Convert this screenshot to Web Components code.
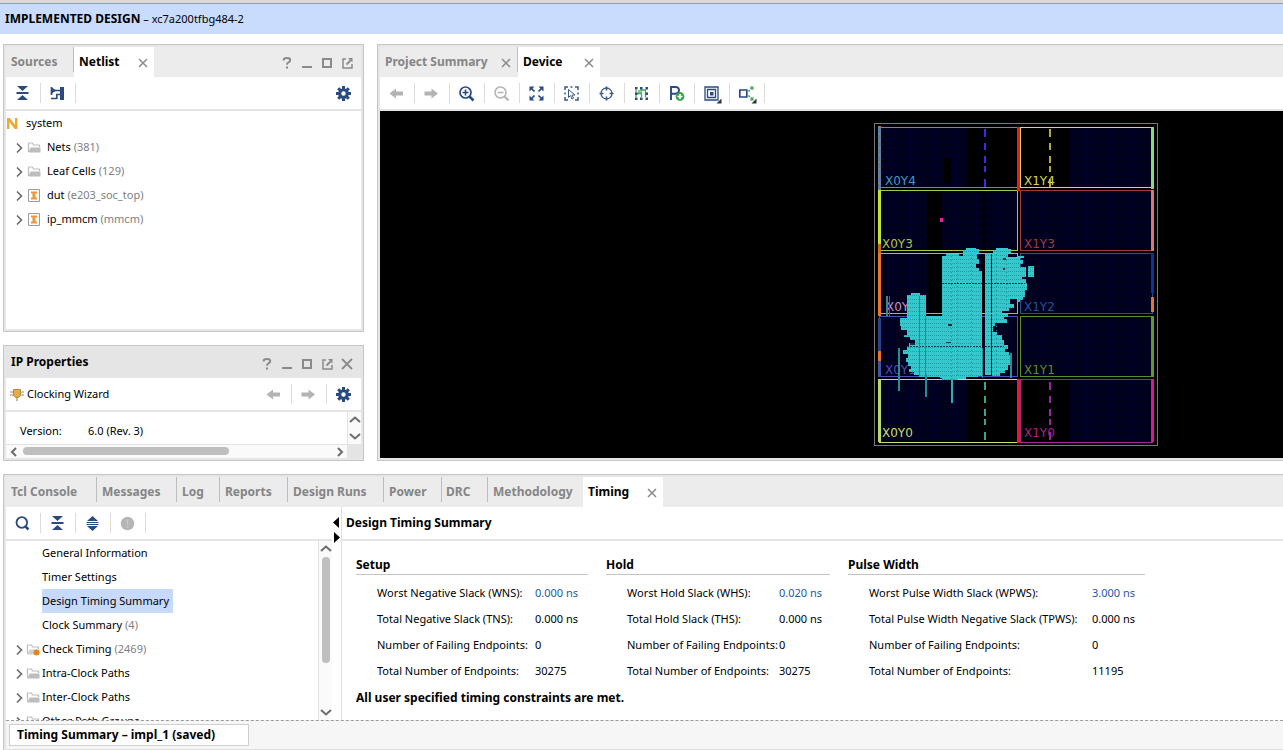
<!DOCTYPE html>
<html lang="en">
<head>
<meta charset="utf-8">
<title>Implemented Design</title>
<style>
  html, body { margin: 0; height: 100%; }
  body { font: 11px/24px "Noto Sans", "Open Sans", sans-serif; color: #000; background: #fff; }
</style>
</head>
<body>
<design-workbench></design-workbench>

<script>
const ICONS = {
  close: '<path d="M4 4l8 8M12 4l-8 8" stroke="#8a8a8a" stroke-width="1.5"/>',
  closeBig: '<path d="M3 3l10 10M13 3L3 13" stroke="#8a8a8a" stroke-width="1.8"/>',
  help: '<path d="M4.8 5.6V4.4Q5 3 8 3t3.2 1.6Q11.4 6.5 9.5 7.4 8 8 8 9.8" stroke="#8a8a8a" stroke-width="2"/><path d="M7 11.5h2v2H7z" fill="#8a8a8a"/>',
  min: '<path d="M3 12h10" stroke="#8a8a8a" stroke-width="2"/>',
  max: '<path d="M4 4h8v8H4z" stroke="#8a8a8a" stroke-width="2"/>',
  float: '<path d="M7 4H4v9h9V9" stroke="#8a8a8a" stroke-width="1.5"/><path d="M7.5 9.5l4-4" stroke="#8a8a8a" stroke-width="1.8"/><path d="M9 3h4.5v4.5z" fill="#8a8a8a"/>',
  collapse: '<path d="M3 1h11L8.5 6zM3 15h11L8.5 10zM2.500 7h12v2h-12z" fill="#2b4a7f"/>',
  expand: '<path d="M3 6h11L8.5 1zM3 11h11L8.5 16zM2.500 7h12v1h-12zM2.500 9h12v1h-12z" fill="#2b4a7f"/>',
  schematic: '<path d="M2 2l5.500 3.500L2 9zM11 2h4v13h-4z" fill="#2b4a7f"/><path d="M6 5.500h6M2 13.500h6M7.800 14V9.500H12M2.500 2v8" stroke="#2b4a7f" stroke-width="1.7"/>',
  gear: '<g fill="#2b4a7f"><path d="M7 1h3v15H7zM1 7h15v3H1z"/><path d="M7 1h3v15H7zM1 7h15v3H1z" transform="rotate(45 8.5 8.5)"/></g><circle cx="8.5" cy="8.5" r="3.7" stroke="#2b4a7f" stroke-width="3.2"/><circle cx="8.5" cy="8.5" r="2.2" fill="#fff"/>',
  back: '<path d="M1.500 8.500L8 3.500v3h7v4H8v3z" fill="#b3b3b3"/>',
  fwd: '<path d="M15 8.500L8.500 3.500v3h-7v4h7v3z" fill="#b3b3b3"/>',
  zoomIn: '<circle cx="7.5" cy="7.5" r="5.5" stroke="#2b4a7f" stroke-width="1.7"/><path d="M11.500 11.500l4 4" stroke="#2b4a7f" stroke-width="2.5"/><path d="M7.500 4.500v6M4.500 7.500h6" stroke="#2b4a7f" stroke-width="1.6"/>',
  zoomOut: '<circle cx="7.5" cy="7.5" r="5.5" stroke="#b3b3b3" stroke-width="1.5"/><path d="M11.500 11.500l4 4" stroke="#b3b3b3" stroke-width="2.2"/><path d="M4.500 7.500h6" stroke="#b3b3b3" stroke-width="1.5"/>',
  fit: '<path d="M1.500 1.500h5l-5 5zM15.500 1.500v5l-5-5zM1.500 15.500v-5l5 5zM15.500 15.500h-5l5-5z" fill="#2b4a7f"/><path d="M3 3l3.500 3.500M14 3l-3.500 3.500M3 14l3.500-3.500M14 14l-3.500-3.500" stroke="#2b4a7f" stroke-width="1.7"/>',
  fitSel: '<path d="M2 5V2h3M12 2h3v3M2 12v3h3M15 12v3h-3M7.500 2h2M2 7.500v2M15 7.500v2" stroke="#3b5889" stroke-width="1.5"/><path d="M5.500 4.500v8l2-2 1.500 3.500 1.500-.7L9 10h3z" stroke="#3b5889"/>',
  target: '<circle cx="8.5" cy="8.5" r="5.5" stroke="#3b5889" stroke-width="1.3"/><path d="M8.500 1.500v4M8.500 11.500v4M1.500 8.500h4M11.500 8.500h4" stroke="#3b5889" stroke-width="1.6"/>',
  routing: '<path d="M3 5v7M8 8.500V5h4.500v7M4 8.500h4.500V12M12.500 8.500H14M6 5v3.500" stroke="#45a856" stroke-width="1.3"/><path d="M2 2h2.500v2.500H2zM7 2h2.500v2.500H7zM12.500 2H15v2.500h-2.500zM2 12.500h2.500V15H2zM7 12.500h2.500V15H7zM12.500 12.500H15V15h-2.500zM2 7.500h2.500V10H2zM12.500 7.500H15V10h-2.500z" fill="#2b4a7f"/>',
  pblock: '<path d="M3 15V2h4.500Q11 2 11 5.300T7.500 8.700H3" stroke="#2b4a7f" stroke-width="1.9"/><circle cx="12" cy="11.500" r="4.4" fill="#38a24a"/><path d="M12 9v5M9.500 11.500h5" stroke="#fff" stroke-width="1.6"/>',
  layers: '<path d="M2 2h13v13H2zM4.500 4.500h8v8h-8z" stroke="#2b4a7f" stroke-width="1.3"/><path d="M7 7h3.500v3.500H7z" fill="#2b4a7f"/><path d="M18.500 13.500v5h-5z" fill="#333"/>',
  connect: '<path d="M1.800 5h7v7h-7z" stroke="#2b4a7f" stroke-width="1.7"/><path d="M10.500 6.500l4-4M10.500 10.500l4 4" stroke="#45a856" stroke-width="1.6" stroke-dasharray="2 1"/><path d="M11.500 1.500h4v4zM15.500 11.500v4h-4z" fill="#45a856"/><path d="M18.500 13.500v5h-5z" fill="#333"/>',
  search: '<circle cx="7.8" cy="7.5" r="5.3" stroke="#2b4a7f" stroke-width="1.8"/><path d="M11.500 11.500l3 3" stroke="#2b4a7f" stroke-width="2.5"/>',
  alert: '<circle cx="8.5" cy="8.5" r="6.8" fill="#b5b5b5"/><path d="M8.500 4.500v5M8.500 11v1.500" stroke="#c9c9c9" stroke-width="1.6"/>',
  chevron: '<path d="M6 4.500l4.500 4.500L6 13.500" stroke="#6c6c6c" stroke-width="1.7"/>',
  folder: '<path d="M2.500 13V4h4l1 2h6v2" stroke="#bdbdbd" stroke-width="1.2"/><path d="M4.500 8.500h10v5h-12z" fill="#bdbdbd"/>',
  folderDot: '<path d="M2.500 13V4h4l1 2h6v2" stroke="#bdbdbd" stroke-width="1.2"/><path d="M4.500 8.500h10v5h-12z" fill="#cfcfcf"/><circle cx="11.5" cy="11.5" r="2.9" fill="#e8821e"/>',
  instance: '<path d="M2.500 2.500h11v12h-11z" stroke="#9a9a9a"/><path d="M5 4.500h6v2H9.500v4H11v2H5v-2h1.500v-4H5z" fill="#f0953b"/>',
  netlist: '<path d="M2.200 14V3M10.200 14V3" stroke="#eda82e" stroke-width="2.4"/><path d="M2.500 3.500l7.500 10" stroke="#eda82e" stroke-width="2.8"/>',
  ip: '<path d="M1 6h14M1 9h14M8 11v4" stroke="#a58a78" stroke-width="1.2"/><path d="M4.500 3.500h7v6l-2 2h-3l-2-2z" fill="#e5ac45" stroke="#b98b3c"/>'
};

function define(name, css, html, init) {
  const template = document.createElement('template');
  template.innerHTML = `<style>:host{display:block;box-sizing:border-box}*{box-sizing:border-box}button{font:inherit;color:inherit;border:0;padding:0;margin:0;background:none}${css}</style>${html}`;
  customElements.define(name, class extends HTMLElement {
    constructor() {
      super();
      this.attachShadow({ mode: 'open' }).append(template.content.cloneNode(true));
    }
    connectedCallback() { if (init) init(this, this.shadowRoot); }
  });
}

define('ui-icon', `:host{width:17px;height:17px;flex:none}svg{display:block;overflow:visible}`,
  `<svg width="17" height="17" viewBox="0 0 17 17" fill="none" aria-hidden="true"></svg>`,
  (el, root) => { root.querySelector('svg').innerHTML = ICONS[el.getAttribute('name')] || ''; });

/* Toolbar button: 34px cell followed by a short separator line */
define('tool-button', `
  :host{display:flex;align-items:center;width:35px;height:32px;flex:none}
  button{flex:1;display:flex;justify-content:center;align-items:center;height:32px;padding-right:1px}
  i{width:1px;height:20px;background:#dcdcdc}
  :host([last]){width:34px}:host([last]) i{display:none}`,
  `<button type="button"><ui-icon></ui-icon></button><i></i>`,
  (el, root) => {
    const b = root.querySelector('button');
    b.setAttribute('aria-label', el.getAttribute('label'));
    b.disabled = el.hasAttribute('disabled');
    const icon = document.createElement('ui-icon');
    icon.setAttribute('name', el.getAttribute('icon'));
    b.replaceChildren(icon);
  });

define('tool-bar', `:host{display:flex;height:34px;border-bottom:2px solid #e4e4e4;background:#fff;flex:none;align-items:center}`, `<slot></slot>`);

define('window-buttons', `:host{display:flex;margin-left:auto;padding:2px 4px 0 0}
  button{width:20px;height:20px;display:flex;align-items:center;justify-content:center}`, ``,
  (el, root) => {
    const all = { help: 'Help', min: 'Minimize', max: 'Maximize', float: 'Float', closeBig: 'Close' };
    for (const name of el.getAttribute('show').split(' '))
      root.innerHTML += `<button type="button" aria-label="${all[name]}"><ui-icon name="${name}"></ui-icon></button>`;
  });

define('dock-tab', `
  :host{display:flex;height:30px;color:#858585;font:bold 12px/26px "Noto Sans","Open Sans",sans-serif;white-space:nowrap;flex:none}
  .tab{padding:0 14px 0 5px;line-height:26px;text-align:left;flex:1}
  .x{display:none;width:17px;margin:2px 2px 0 0;align-items:center}
  :host([closable]) .x{display:flex}
  :host([closable]) .tab{padding-right:0}
  i{width:1px;height:25px;background:#bdbdbd}
  :host([active]){background:#fff;color:#000}
  :host([active]) i{display:none}`,
  `<button class="tab" type="button" role="tab"><slot></slot></button><button class="x" type="button" aria-label="Close tab"><ui-icon name="close"></ui-icon></button><i></i>`);

define('tab-strip', `:host{display:flex;height:30px;background:#ececec;align-items:center;flex:none}`, `<slot></slot>`);

define('dock-panel', `:host{display:flex;flex-direction:column;min-width:0;min-height:0;border:1px solid #c6c6c6;background:#e6e6e6;padding:2px}
  .body{flex:1;min-height:0;background:#fff;display:flex;flex-direction:column;overflow:hidden}
  :host([open-right]){border-right:0;padding-right:0}
  :host([open-bottom]){border-bottom:0;padding-bottom:0}`,
  `<slot name="head"></slot><div class="body"><slot></slot></div>`);

define('tree-item', `
  :host{display:flex;align-items:center;height:24px;padding-left:5px;white-space:pre;flex:none}
  ui-icon+ui-icon{margin-left:-2px}
  .l{padding-left:4px}
  ::slotted(small){font-size:11px;color:#808080}
  :host([near]) .l{padding-left:0}
  :host([near]) ui-icon+ui-icon{margin-left:-3px}
  :host([leaf]){padding-left:36px}:host([leaf]) .l{padding:0 4px 0 0}
  :host([root]){padding-left:0}:host([root]) .l{padding-left:3px}
  :host([selected]) .l{background:#c8dafc}`, `<span class="l"><slot></slot></span>`,
  (el, root) => {
    const l = root.querySelector('.l');
    if (!el.hasAttribute('leaf') && !el.hasAttribute('root')) l.insertAdjacentHTML('beforebegin', '<ui-icon name="chevron"></ui-icon>');
    if (el.hasAttribute('icon')) l.insertAdjacentHTML('beforebegin', `<ui-icon name="${el.getAttribute('icon')}"></ui-icon>`);
  });

define('scroll-rail', `
  :host{display:flex;align-items:center;background:#fafafa;flex:none}
  :host([vertical]){flex-direction:column;width:14px;border-left:1px solid #e2e2e2;overflow:hidden}
  :host([horizontal]){height:14px;border-top:1px solid #e2e2e2}
  :host([horizontal]) svg{width:17px}
  .track{flex:1;align-self:stretch}
  .thumb{background:#bfbfbf;border-radius:4px}
  :host([vertical]) .thumb{width:8px;height:var(--thumb,0);margin:0 auto}
  :host([horizontal]) .thumb{height:8px;width:var(--thumb,0);margin-top:2px}
  svg{display:block;flex:none}`,
  `<svg width="13" height="16" viewBox="0 0 13 16" fill="none"><path stroke="#6c6c6c" stroke-width="2"/></svg><div class="track"><div class="thumb"></div></div><svg width="13" height="16" viewBox="0 0 13 16" fill="none"><path stroke="#6c6c6c" stroke-width="2"/></svg>`,
  (el, root) => {
    const v = el.hasAttribute('vertical');
    const [a, b] = root.querySelectorAll('path');
    a.setAttribute('d', v ? 'M2 10l5-4.500L12 10' : 'M8 4L4 8l4 4');
    b.setAttribute('d', v ? 'M2 6l5 4.500L12 6' : 'M6 4l4 4-4 4');
  });

define('slack-table', `
  :host{flex:none;width:var(--w)}
  table{border-collapse:collapse;width:100%;table-layout:fixed}
  caption{font:bold 12px/18px "Noto Sans","Open Sans",sans-serif;text-align:left;border-bottom:1px solid #c4c4c4;margin-bottom:5px}
  th{font-weight:normal;text-align:left;padding:0 0 0 21px;width:var(--label);white-space:nowrap}
  td{padding:0;white-space:nowrap}
  th,td{height:26px;line-height:26px}
  a{color:#2558a5;text-decoration:none}`, `<table><caption></caption><tbody></tbody></table>`,
  (el, root) => {
    root.querySelector('caption').textContent = el.getAttribute('heading');
    const rows = el.getAttribute('rows').split('|').map(r => r.split('='));
    root.querySelector('tbody').innerHTML = rows.map(([k, v], i) =>
      `<tr><th scope="row">${k}</th><td>${i ? v : `<a href="#paths">${v}</a>`}</td></tr>`).join('');
  });

define('device-view', `
  :host{flex:1;background:#000;display:flex;justify-content:flex-end;align-items:flex-start;padding:12px 124px 0 0;min-height:0}
  svg{display:block;flex:none}
  text{font:12px "DejaVu Sans",sans-serif}`,
  `<svg width="285" height="324" viewBox="874 123 285 324" role="img" aria-label="Device floorplan"></svg>`,
  (el, root) => {
    const ys = [[127, 61], [190, 61], [253, 61], [316, 61], [379, 64]];
    const left = ['#3a9fc0', '#a9c944', '#c795cf', '#4c50b4', '#c9df70'];
    const right = ['#d7d75a', '#a23c3c', '#1f5698', '#5d8c26', '#a9218d'];
    const rect = (x, y, w, h, f) => `<rect x="${x}" y="${y}" width="${w}" height="${h}" fill="${f}"/>`;
    const line = (x, y, h, c, w) => `<path d="M${x} ${y}v${h}" stroke="${c}" stroke-width="${w}"/>`;
    let s = `<defs>
      <pattern id="fabric" width="11" height="8" patternUnits="userSpaceOnUse"><path d="M0 0h11v8H0z" fill="#00001f"/><path d="M1.5 0v8M8.5 0v8" stroke="#00002c"/><path d="M0 .5h11" stroke="#000016"/></pattern>
      <pattern id="cells" width="4" height="4" patternUnits="userSpaceOnUse"><path d="M0 0h4v4H0z" fill="#34c8cd"/><path d="M0 3.5h4" stroke="#239da5" stroke-dasharray="1 1"/></pattern></defs>`;
    s += `<rect x="874.5" y="123.5" width="283" height="322" fill="#000" stroke="#777"/>`;
    ys.forEach(([y, h], i) => {
      s += rect(881, y, 137, h, 'url(#fabric)') + rect(1020, y, 133, h, 'url(#fabric)');
      if (i === 0 || i === 4) s += rect(967, y, 51, h, '#000') + rect(1021, y, 49, h, '#000');
      if (i === 1 || i === 2) s += rect(927, y, 15, h, '#000') + rect(982, y, 4, h, '#00000b');
      if (i === 0) s += rect(944, y + 31, 7, 26, '#000');
      s += `<rect x="879.5" y="${y + .5}" width="138" height="${h - 1}" fill="none" stroke="${left[i]}"/>`;
      s += `<rect x="1020.5" y="${y + .5}" width="132" height="${h - 1}" fill="none" stroke="${right[i]}"/>`;
    });
    /* I/O banks on both edges */
    s += line(879.5, 126, 64, '#547fae', 3) + `<path d="M879.5 126v64" stroke="#b77b54" stroke-opacity=".6" stroke-width="3" stroke-dasharray="2 5"/>`;
    s += line(879.5, 190, 54, '#bfe62d', 3) + line(879.5, 244, 9, '#c86c15', 3) + line(879.5, 253, 63, '#ef7327', 3) + line(879.5, 318, 33, '#294389', 3) + line(879.5, 351, 10, '#ef7327', 3) + line(879.5, 361, 16, '#3f559e', 3) + line(879.5, 379, 63, '#b6d96b', 3);
    s += line(1152.5, 127, 62, '#8bdb75', 3) + line(1152.5, 190, 61, '#df7771', 3) + line(1152.5, 253, 40, '#0c3398', 3) + line(1152.5, 297, 15, '#ef7327', 3) + line(1152.5, 316, 61, '#5d9a2f', 3) + line(1152.5, 379, 63, '#df1693', 3);
    s += line(1018.5, 127, 64, '#ef1a1e', 3) + line(1018.5, 379, 64, '#ef1724', 3);
    [[985, 129, '#3e27e8'], [1050, 129, '#b3a83a'], [985, 382, '#35a58f'], [1050, 382, '#97289b']].forEach(([x, y, c]) => {
      s += `<path d="M${x} ${y}v8m0 6v7m0 6v7m0 3v6m0 7v8" stroke="${c}" stroke-width="2"/>`;
    });
    s += rect(940, 218, 3, 4, '#e326a4');
    const label = (x, y, t, c) => `<text x="${x}" y="${y}" fill="${c}">${t}</text>`;
    const lx = [885, 882, 886, 885, 882];
    [185, 248, 311, 374, 437].forEach((y, i) => {
      s += label(lx[i], y, 'X0Y' + (4 - i), left[i]) + label(1024, y, 'X1Y' + (4 - i), right[i]);
    });
    /* Placed cells */
    s += `<path fill="url(#cells)" d="M942 256H946V254H959V256H963V250H966V248H976V249H979V253H977V259H979V264H976V268H979V271H982V376H978V377H966V379H958V380H942V378H940V377H919V375H914V372H909V369H911V366H908V362H906V358H908V354H903V350H907V346H909V343H915V340H910V337H904V335H907V330H901V326H900V318H907V295H911V293H920V295H926V316H942Z"/>`;
    s += `<path fill="url(#cells)" d="M985 253H991V375H985ZM992 253H993V250H996V248H1008V249H1011V253H1008V257H1017V256H1024V258H1020V260H1023V264H1020V267H1026V277H1022V279H1026V283H1027V290H1025V297H1023V300H1020V302H1017V299H1010V304H1014V308H1009V311H1002V314H1008V317H1004V319H1007V323H995V326H993V332H997V335H1002V340H1004V345H1008V349H1005V352H1009V355H1011V365H1008V370H1005V373H1000V376H992ZM1028 266H1034V277H1028Z"/>`;
    s += `<path d="M942 283.5h40M985 283.5h40M907 346.500h75M985 346.500h19" stroke="#053c48" stroke-dasharray="2 1"/><path stroke="#1b8f98" stroke-dasharray="1 3" d="M951.5 256v122M957.5 262v116M971.5 254v122M996.5 254v122M1006.5 256v54"/><path d="M919.5 296v80M925.5 316v60" stroke="#1b919a"/>`;
    s += `<path d="M910 343h5v2h-5zM948 324h4v2h-4zM946 342h5v1h-5zM1003 258h3v2h-3zM1003 268h2v2h-2z" fill="#05343c"/>`;
    s += line(899, 348, 43, '#258f92', 2) + line(926, 374, 23, '#258f92', 2) + line(952, 378, 25, '#2dafaf', 2) + line(887, 296, 20, '#3d8587', 2) + line(1011, 353, 25, '#258f92', 2) + line(889.5, 296, 20, '#286a80', 1) + line(982.5, 348, 30, '#258f92', 1);
    root.querySelector('svg').innerHTML = s;
  });

define('app-header', `:host{height:34px;border-top:3px solid #dcd9d5;background:#c9dcfd;box-shadow:inset 0 1px #8c9fbd;padding:3px 5px 0;line-height:26px;flex:none}
  b{font-size:12px}`, `<b><slot name="title"></slot></b> – <slot></slot>`);

define('split-handle', `:host{width:10px;flex:none;border-right:1px solid #e0e0e0;position:relative}
  svg{position:absolute;left:0;top:9px}`, `<svg width="8" height="27" viewBox="0 0 8 27"><path d="M7 1v11L1 6.5zM2 16v11l6-5.5z"/></svg>`);

define('design-workbench', `
  :host{display:flex;flex-direction:column;min-height:100vh}
  main{flex:1;display:grid;grid-template-columns:361px minmax(0,1fr);grid-template-rows:minmax(287px,1fr) 116px 276px;gap:13px;padding:10px 0 0 3px}
  .device{grid-column:2;grid-row:1/3}
  .timing{grid-column:1/3}
  .tree{display:flex;flex-direction:column}
  .push{margin-left:auto}
  .title{display:flex;height:30px;align-items:center;background:#e5e5e5;font:bold 12px/26px "Noto Sans","Open Sans",sans-serif}
  .title h2{font:inherit;margin:0;padding:0 0 2px 5px}
  .crumb{display:flex;align-items:center;gap:1px;padding-left:3px}
  .props{display:flex;flex:1;min-height:0}
  .props dl{flex:1;margin:0;display:flex;padding:7px 0 0 14px}
  .props dt{width:68px}.props dd{margin:0}
  .bottom{display:flex;height:14px}
  .bottom scroll-rail{flex:1}
  .bottom i{width:14px;background:#e4e4e4}
  .split{display:flex;flex:1;min-height:0}
  .nav{width:326px;display:flex;flex-direction:column;min-height:0}
  .navbody{display:flex;flex:1;min-height:0}
  .navbody .tree{flex:1;overflow:hidden}
  .report{flex:1;min-width:0;display:flex;flex-direction:column}
  .report h3{font:bold 12px/32px "Noto Sans","Open Sans",sans-serif;margin:0;padding-left:4px;border-bottom:2px solid #e4e4e4;height:34px}
  .tables{display:flex;gap:18px;padding:15px 0 0 14px}
  .met{font:bold 12px/24px "Noto Sans","Open Sans",sans-serif;margin:0;padding:2px 0 0 14px}
  footer{height:30px;flex:none;border-top:1px dashed #9b9b9b;border-bottom:1px solid #dedede;background:#f6f6f6;padding:3px}
  footer button{display:block;width:240px;height:22px;border:1px solid #cfcfcf;background:#fff;text-align:left;padding:0 0 0 7px;font:bold 12px/18px "Noto Sans","Open Sans",sans-serif}`,
  `<app-header><span slot="title">IMPLEMENTED DESIGN</span>xc7a200tfbg484-2</app-header>
  <main>
    <dock-panel>
      <tab-strip slot="head"><dock-tab style="width:68px">Sources</dock-tab><dock-tab active closable style="width:80px">Netlist</dock-tab><window-buttons show="help min max float"></window-buttons></tab-strip>
      <tool-bar><tool-button icon="collapse" label="Collapse all"></tool-button><tool-button icon="schematic" label="Schematic"></tool-button><tool-button class="push" last icon="gear" label="Settings"></tool-button></tool-bar>
      <div class="tree">
        <tree-item root icon="netlist">system</tree-item>
        <tree-item icon="folder">Nets <small>(381)</small></tree-item>
        <tree-item icon="folder">Leaf Cells <small>(129)</small></tree-item>
        <tree-item icon="instance">dut <small>(e203_soc_top)</small></tree-item>
        <tree-item icon="instance">ip_mmcm <small>(mmcm)</small></tree-item>
      </div>
    </dock-panel>
    <dock-panel class="device" open-right>
      <tab-strip slot="head"><dock-tab closable style="width:138px">Project Summary</dock-tab><dock-tab active closable style="width:82px">Device</dock-tab></tab-strip>
      <tool-bar><tool-button icon="back" label="Back" disabled></tool-button><tool-button icon="fwd" label="Forward" disabled></tool-button><tool-button icon="zoomIn" label="Zoom in"></tool-button><tool-button icon="zoomOut" label="Zoom out" disabled></tool-button><tool-button icon="fit" label="Zoom fit"></tool-button><tool-button icon="fitSel" label="Zoom to selection"></tool-button><tool-button icon="target" label="Autofit selection"></tool-button><tool-button icon="routing" label="Routing resources"></tool-button><tool-button icon="pblock" label="Draw Pblock"></tool-button><tool-button icon="layers" label="Cell drag mode"></tool-button><tool-button icon="connect" label="Cell connections"></tool-button></tool-bar>
      <device-view></device-view>
    </dock-panel>
    <dock-panel>
      <div class="title" slot="head"><h2>IP Properties</h2><window-buttons show="help min max float closeBig"></window-buttons></div>
      <tool-bar><span class="crumb"><ui-icon name="ip"></ui-icon>Clocking Wizard</span><tool-button class="push" icon="back" label="Back" disabled></tool-button><tool-button icon="fwd" label="Forward" disabled></tool-button><tool-button last icon="gear" label="Settings"></tool-button></tool-bar>
      <div class="props"><dl><dt>Version:</dt><dd>6.0 (Rev. 3)</dd></dl><scroll-rail vertical></scroll-rail></div>
      <div class="bottom"><scroll-rail horizontal style="--thumb:206px"></scroll-rail><i></i></div>
    </dock-panel>
    <dock-panel class="timing" open-right open-bottom>
      <tab-strip slot="head"><dock-tab style="width:91px">Tcl Console</dock-tab><dock-tab style="width:80px">Messages</dock-tab><dock-tab style="width:43px">Log</dock-tab><dock-tab style="width:68px">Reports</dock-tab><dock-tab style="width:96px">Design Runs</dock-tab><dock-tab style="width:57px">Power</dock-tab><dock-tab style="width:47px">DRC</dock-tab><dock-tab style="width:95px">Methodology</dock-tab><dock-tab active closable style="width:80px">Timing</dock-tab></tab-strip>
      <div class="split">
        <div class="nav">
          <tool-bar><tool-button icon="search" label="Search"></tool-button><tool-button icon="collapse" label="Collapse all"></tool-button><tool-button icon="expand" label="Expand all"></tool-button><tool-button icon="alert" label="Messages" disabled></tool-button></tool-bar>
          <div class="navbody"><div class="tree">
            <tree-item leaf>General Information</tree-item>
            <tree-item leaf>Timer Settings</tree-item>
            <tree-item leaf selected>Design Timing Summary</tree-item>
            <tree-item leaf>Clock Summary <small>(4)</small></tree-item>
            <tree-item near icon="folderDot">Check Timing <small>(2469)</small></tree-item>
            <tree-item near icon="folder">Intra-Clock Paths</tree-item>
            <tree-item near icon="folder">Inter-Clock Paths</tree-item>
            <tree-item near icon="folder">Other Path Groups</tree-item>
          </div><scroll-rail vertical style="--thumb:106px"></scroll-rail></div>
        </div>
        <split-handle></split-handle>
        <section class="report">
          <h3>Design Timing Summary</h3>
          <div class="tables">
            <slack-table style="--w:232px;--label:179px" heading="Setup" rows="Worst Negative Slack (WNS):=0.000 ns|Total Negative Slack (TNS):=0.000 ns|Number of Failing Endpoints:=0|Total Number of Endpoints:=30275"></slack-table>
            <slack-table style="--w:224px;--label:173px" heading="Hold" rows="Worst Hold Slack (WHS):=0.020 ns|Total Hold Slack (THS):=0.000 ns|Number of Failing Endpoints:=0|Total Number of Endpoints:=30275"></slack-table>
            <slack-table style="--w:297px;--label:244px" heading="Pulse Width" rows="Worst Pulse Width Slack (WPWS):=3.000 ns|Total Pulse Width Negative Slack (TPWS):=0.000 ns|Number of Failing Endpoints:=0|Total Number of Endpoints:=11195"></slack-table>
          </div>
          <p class="met">All user specified timing constraints are met.</p>
        </section>
      </div>
      <footer><button type="button">Timing Summary – impl_1 (saved)</button></footer>
    </dock-panel>
  </main>`);
</script>
</body>
</html>
